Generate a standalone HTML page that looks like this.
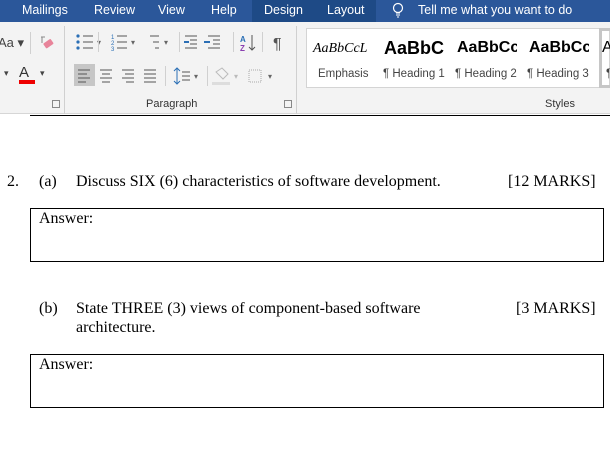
<!DOCTYPE html>
<html><head><meta charset="utf-8"><style>
*{margin:0;padding:0;box-sizing:border-box}
body{width:610px;height:462px;overflow:hidden;background:#fff;position:relative;font-family:"Liberation Sans",sans-serif}
.a{position:absolute}
.tabs{left:0;top:0;width:610px;height:22px;background:#2b579a;color:#fff;font-size:12.5px}
.tabs span{position:absolute;top:3px}
.rib{left:0;top:22px;width:610px;height:92px;background:#f3f3f3;border-bottom:1px solid #d6d6d6}
.sep{position:absolute;width:1px;background:#d0d0d0}
.ln{position:absolute;height:1.5px;background:#555}
.doc{font-family:"Liberation Serif",serif;font-size:16px;color:#000}
.box{position:absolute;border:1px solid #000;left:30px;width:574px}
</style></head><body>
<div class="a tabs">
<div class="a" style="left:252px;top:0;width:124px;height:22px;background:#1e4a86"></div>
<span style="left:22px">Mailings</span><span style="left:94px">Review</span><span style="left:158px">View</span><span style="left:211px">Help</span><span style="left:264px">Design</span><span style="left:327px">Layout</span>
<svg class="a" style="left:392px;top:2px" width="12" height="17" viewBox="0 0 12 17"><circle cx="6" cy="6" r="4.5" fill="none" stroke="#fff" stroke-width="1.2"/><path d="M4 11h4M4 13h4M5 15h2" stroke="#fff" stroke-width="1.1"/></svg>
<span style="left:418px">Tell me what you want to do</span>
</div>
<div class="a rib">
<div class="a" style="left:-2px;top:13px;font-size:13px;color:#444">Aa ▾</div>
<div class="sep" style="left:30px;top:10px;height:22px"></div>
<svg class="a" style="left:38px;top:12px" width="16" height="16"><path d="M3 3l4 0M4 3v6" stroke="#888"/><rect x="6" y="7" width="9" height="6" rx="1" fill="#e8849a" transform="rotate(-35 10 10)"/></svg>
<div class="a" style="left:4px;top:46px;font-size:9px;color:#444">▾</div>
<div class="a" style="left:19px;top:42px;font-size:15px;color:#333">A</div>
<div class="a" style="left:19px;top:58px;width:16px;height:4px;background:#e00"></div>
<div class="a" style="left:40px;top:46px;font-size:9px;color:#444">▾</div>
<div class="sep" style="left:64px;top:4px;height:88px"></div>
<svg class="a" style="left:74px;top:10px" width="210" height="62">
<g fill="#2b6fb5"><circle cx="4" cy="4" r="1.6"/><circle cx="4" cy="10" r="1.6"/><circle cx="4" cy="16" r="1.6"/></g>
<path d="M9 4h10M9 10h10M9 16h10" stroke="#555"/>
<text x="23" y="13" font-size="8" fill="#666">▾</text>
<text x="37" y="7" font-size="6" fill="#2b6fb5">1</text><text x="37" y="13" font-size="6" fill="#2b6fb5">2</text><text x="37" y="19" font-size="6" fill="#2b6fb5">3</text>
<path d="M43 4h10M43 10h10M43 16h10" stroke="#555"/><text x="57" y="13" font-size="8" fill="#666">▾</text>
<path d="M76 4h9M79 10h6M81 16h4" stroke="#555"/><text x="90" y="13" font-size="8" fill="#666">▾</text>
<path d="M111 4h12M116 8h7M116 12h7M111 16h12" stroke="#555"/><path d="M115 10h-5" stroke="#2b6fb5" stroke-width="2"/>
<path d="M134 4h12M139 8h7M139 12h7M134 16h12" stroke="#555"/><path d="M130 10h6" stroke="#2b6fb5" stroke-width="2"/>
<text x="166" y="10" font-size="8" fill="#2b6fb5" font-weight="bold">A</text><text x="166" y="19" font-size="8" fill="#8a3fb0" font-weight="bold">Z</text><path d="M178 3v15M175 15l3 3 3-3" stroke="#555" fill="none"/>
<text x="199" y="17" font-size="16" fill="#555">¶</text>
<rect x="0" y="32" width="21" height="22" fill="#c6c6c6"/>
<path d="M4 38h12M4 42h9M4 46h12M4 50h8" stroke="#555"/>
<path d="M26 38h12M28 42h8M26 46h12M28 50h8" stroke="#555"/>
<path d="M48 38h12M51 42h9M48 46h12M52 50h8" stroke="#555"/>
<path d="M70 38h12M70 42h12M70 46h12M70 50h12" stroke="#555"/>
<path d="M103 36v16M100 39l3-3 3 3M100 49l3 3 3-3" stroke="#2b6fb5" fill="none"/><path d="M108 40h8M108 44h8M108 48h8" stroke="#555"/><text x="120" y="47" font-size="8" fill="#666">▾</text>
<path d="M142 40l6-4 6 6-5 5z" fill="none" stroke="#bbb"/><rect x="138" y="50" width="18" height="3" fill="#ddd"/><text x="160" y="47" font-size="8" fill="#bbb">▾</text>
<rect x="175" y="38" width="12" height="12" fill="none" stroke="#aaa" stroke-dasharray="1 1"/><text x="194" y="47" font-size="8" fill="#666">▾</text>
</svg>
<div class="sep" style="left:98px;top:10px;height:20px"></div>
<div class="sep" style="left:179px;top:10px;height:20px"></div>
<div class="sep" style="left:233px;top:10px;height:20px"></div>
<div class="sep" style="left:262px;top:10px;height:20px"></div>
<div class="sep" style="left:165px;top:44px;height:20px"></div>
<div class="sep" style="left:207px;top:44px;height:20px"></div>
<div class="a" style="left:146px;top:76px;font-size:11px;color:#333">Paragraph</div>
<div class="a" style="left:52px;top:78px;width:8px;height:8px;border:1px solid #888"></div>
<div class="a" style="left:284px;top:78px;width:8px;height:8px;border:1px solid #888"></div>
<div class="sep" style="left:296px;top:4px;height:88px"></div>
<div class="a" style="left:306px;top:6px;width:304px;height:60px;background:#fff;border:1px solid #d4d4d4"></div>
<div class="a" style="left:599px;top:6px;width:14px;height:60px;border:3px solid #c6c6c6;border-right:none"></div>
<div class="a" style="left:313px;top:19px;font-family:'Liberation Serif',serif;font-style:italic;font-size:14px">AaBbCcL</div>
<div class="a" style="left:384px;top:16px;font-size:18px;font-weight:bold;width:60px;overflow:hidden;white-space:nowrap">AaBbC</div>
<div class="a" style="left:457px;top:17px;font-size:16px;font-weight:bold;width:60px;overflow:hidden;white-space:nowrap">AaBbCc</div>
<div class="a" style="left:529px;top:17px;font-size:16px;font-weight:bold;width:60px;overflow:hidden;white-space:nowrap">AaBbCc</div>
<div class="a" style="left:602px;top:17px;font-size:16px">A</div>
<div class="a" style="left:318px;top:46px;font-size:11.5px;color:#444">Emphasis</div>
<div class="a" style="left:383px;top:46px;font-size:11.5px;color:#444">¶ Heading 1</div>
<div class="a" style="left:455px;top:46px;font-size:11.5px;color:#444">¶ Heading 2</div>
<div class="a" style="left:527px;top:46px;font-size:11.5px;color:#444">¶ Heading 3</div>
<div class="a" style="left:606px;top:46px;font-size:11.5px;color:#444">¶</div>
<div class="a" style="left:545px;top:76px;font-size:11px;color:#333">Styles</div>
</div>
<div class="ln" style="left:30px;top:115px;width:580px;background:#000;height:1px"></div>
<div class="doc">
<div class="a" style="left:7px;top:173px">2.</div>
<div class="a" style="left:39px;top:173px">(a)</div>
<div class="a" style="left:76px;top:173px">Discuss SIX (6) characteristics of software development.</div>
<div class="a" style="left:508px;top:173px">[12 MARKS]</div>
<div class="box" style="top:208px;height:54px"></div>
<div class="a" style="left:39px;top:210px">Answer:</div>
<div class="a" style="left:39px;top:300px">(b)</div>
<div class="a" style="left:76px;top:300px">State THREE (3) views of component-based software</div>
<div class="a" style="left:76px;top:319px">architecture.</div>
<div class="a" style="left:516px;top:300px">[3 MARKS]</div>
<div class="box" style="top:354px;height:54px"></div>
<div class="a" style="left:39px;top:356px">Answer:</div>
</div>
</body></html>
